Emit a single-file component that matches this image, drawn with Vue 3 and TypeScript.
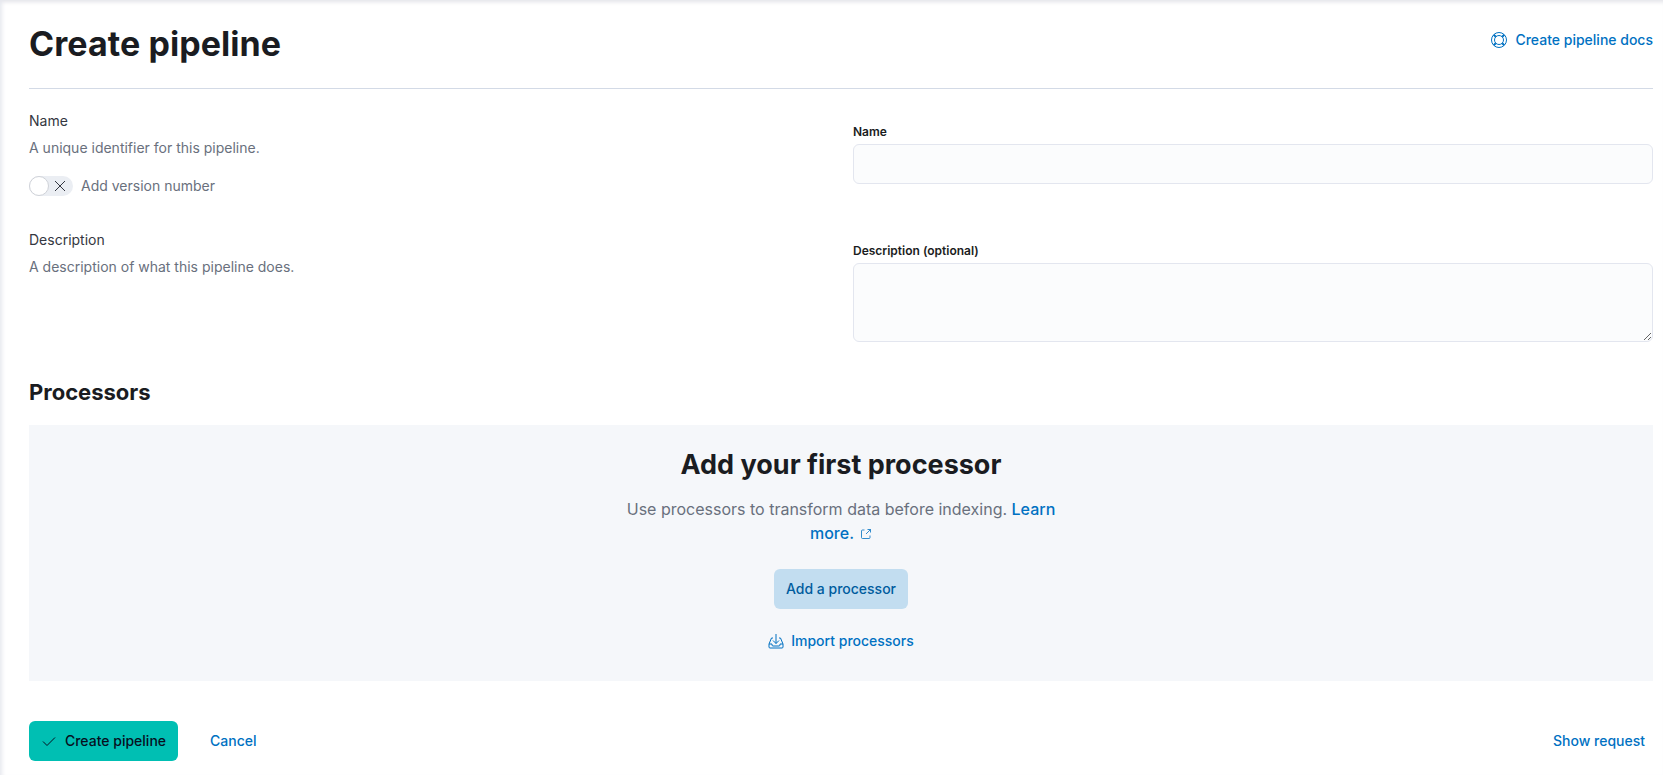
<script setup lang="ts">
const title: string = 'Create pipeline'
</script>

<template>
  <div class="page">
    <main class="content">
      <header class="head">
        <h1>{{ title }}</h1>
        <a class="link docs">
          <svg width="16" height="16" viewBox="0 0 16 16" fill="none" stroke="currentColor">
            <circle cx="8" cy="8" r="7.5" />
            <circle cx="8" cy="8" r="4.5" />
            <path d="M2.7 2.7 4.8 4.8M13.3 2.7 11.2 4.8M2.7 13.3 4.8 11.2M13.3 13.3 11.2 11.2" stroke-width="2" />
          </svg>
          Create pipeline docs
        </a>
      </header>
      <hr class="rule" />

      <section class="form-row first">
        <div class="intro">
          <h3>Name</h3>
          <p class="hint">A unique identifier for this pipeline.</p>
          <div class="switch-row">
            <span class="switch">
              <span class="knob"></span>
              <svg class="cross" width="12" height="12" viewBox="0 0 12 12" fill="none" stroke="#343741">
                <path d="M1 1 11 11M11 1 1 11" />
              </svg>
            </span>
            <span class="hint">Add version number</span>
          </div>
        </div>
        <div class="field">
          <label>Name</label>
          <input class="input" type="text" />
        </div>
      </section>

      <section class="form-row second">
        <div class="intro">
          <h3>Description</h3>
          <p class="hint">A description of what this pipeline does.</p>
        </div>
        <div class="field">
          <label>Description (optional)</label>
          <textarea class="input area"></textarea>
        </div>
      </section>

      <h2 class="section-title">Processors</h2>
      <section class="panel">
        <h2 class="panel-title">Add your first processor</h2>
        <p class="panel-text">
          Use processors to transform data before indexing.
          <a class="link strong">Learn more.<svg class="ext" width="12" height="12" viewBox="0 0 12 12" fill="none" stroke="currentColor" stroke-opacity="0.8"><path d="M4.5 2H2.5a1 1 0 0 0-1 1v6.500a1 1 0 0 0 1 1h6.500a1 1 0 0 0 1-1V7.500M6 6l4.500-4.500M7.500 1.500h3v3" /></svg></a>
        </p>
        <button class="add" type="button">Add a processor</button>
        <a class="link import">
          <svg width="16" height="16" viewBox="0 0 16 16" fill="none" stroke="currentColor">
            <path d="M8 1v9.500M5 7.500 8 10.500 11 7.500M5 5H3.500L1 11v3a1 1 0 0 0 1 1h12a1 1 0 0 0 1-1v-3L12.500 5H11M1 11h3v1a1 1 0 0 0 1 1h6a1 1 0 0 0 1-1v-1h3" />
          </svg>
          Import processors
        </a>
      </section>

      <footer class="foot">
        <div class="foot-left">
          <button class="primary" type="button">
            <svg width="16" height="16" viewBox="0 0 16 16" fill="none" stroke="#07101f">
              <path d="M2 8.500 6 12.500 14 4.500" />
            </svg>
            Create pipeline
          </button>
          <a class="link cancel">Cancel</a>
        </div>
        <a class="link show">Show request</a>
      </footer>
    </main>
  </div>
</template>

<style>
html, body { margin: 0; background: #fff; }
</style>

<style scoped>
.page {
  height: 775px;
  overflow: hidden;
  box-sizing: border-box;
  font-family: Inter, "Liberation Sans", sans-serif;
  color: #343741;
  font-size: 14px;
  line-height: 20px;
  background: #fff;
  padding: 0 10px 0 5px;
  box-shadow: inset 5px 0 4px -3px #e6e8ee, inset 0 5px 4px -3px #e2e3e8;
}
.content { padding-left: 24px; }
.head {
  display: flex;
  justify-content: space-between;
  align-items: flex-start;
  padding-top: 21px;
  height: 68px;
  box-sizing: border-box;
}
h1 {
  margin: 0;
  font-size: 34px;
  line-height: 46px;
  font-weight: 700;
  letter-spacing: 0.07px;
  color: #1a1c21;
}
.link { color: #0071c2; font-weight: 500; display: inline-flex; align-items: center; }
.docs { gap: 8px; margin-top: 9px; }
.rule { border: 0; height: 1px; background: #d3dae6; margin: 20px 0 0; }
.form-row { display: grid; grid-template-columns: 800px 800px; column-gap: 24px; }
.first { margin-top: 22px; height: 119px; }
.second { height: 148px; }
.intro h3 { margin: 0; font-size: 14px; font-weight: 400; line-height: 20px; color: #343741; }
.hint { margin: 0; color: #69707d; font-size: 14px; line-height: 21px; }
.intro .hint { margin-top: 6px; }
.intro .switch-row .hint { margin: 0; }
.switch-row { display: flex; align-items: center; gap: 8px; margin-top: 17px; }
.switch {
  position: relative;
  width: 44px;
  height: 20px;
  border-radius: 10px;
  background: #ebeef3;
}
.knob {
  position: absolute;
  left: 0;
  top: 0;
  width: 18px;
  height: 18px;
  border: 1px solid #cfd2d8;
  border-radius: 50%;
  background: #fff;
}
.cross { position: absolute; left: 25px; top: 4px; }
.field { display: flex; flex-direction: column; padding-top: 11px; }
.field label { font-size: 12px; font-weight: 600; line-height: 20px; color: #1a1c21; margin-bottom: 2px; }
.input {
  display: block;
  box-sizing: border-box;
  width: 800px;
  height: 40px;
  margin: 0;
  border: 1px solid #e3e6ef;
  border-radius: 6px;
  background: #fbfcfd;
  outline: none;
}
.area { height: 79px; resize: vertical; }
h2 {
  margin: 0;
  font-size: 20px;
  line-height: 28px;
  font-weight: 700;
  color: #1a1c21;
}
.section-title { font-size: 22px; }
.panel {
  margin-top: 19px;
  height: 256px;
  background: #f5f7fa;
  display: flex;
  flex-direction: column;
  align-items: center;
  padding-top: 22px;
  box-sizing: border-box;
}
.panel-title { font-size: 27px; line-height: 36px; }
.panel-text {
  width: 448px;
  margin: 14px 0 0;
  text-align: center;
  font-size: 16px;
  line-height: 24px;
  color: #69707d;
}
.strong { display: inline; font-weight: 500; }
.ext { margin-left: 6px; vertical-align: -1px; }
.add {
  margin-top: 24px;
  width: 134px;
  height: 40px;
  border: 0;
  border-radius: 6px;
  background: #c2ddf0;
  color: #005c9e;
  font: 500 14px/20px Inter, "Liberation Sans", sans-serif;
  padding: 0;
}
.import { gap: 7px; margin-top: 22px; }
.foot {
  margin-top: 40px;
  display: flex;
  justify-content: space-between;
  align-items: center;
}
.foot-left { display: flex; align-items: center; gap: 32px; }
.primary {
  width: 149px;
  height: 40px;
  border: 0;
  border-radius: 6px;
  background: #00bfb3;
  color: #07101f;
  font: 500 14px/20px Inter, "Liberation Sans", sans-serif;
  display: flex;
  align-items: center;
  justify-content: center;
  gap: 8px;
  padding: 0;
}
.show { margin-right: 8px; }
</style>
